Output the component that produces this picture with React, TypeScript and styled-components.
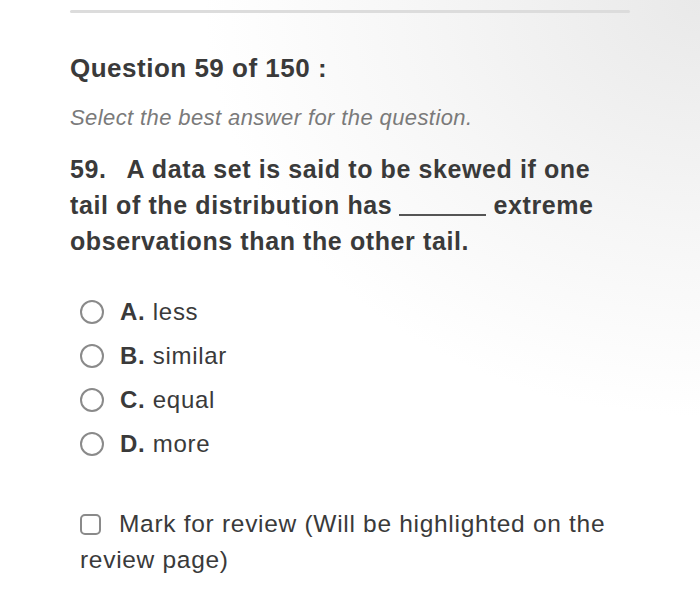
import React, {useState} from "react";
import styled, {createGlobalStyle} from "styled-components";

const GlobalStyle = createGlobalStyle`
  html, body {
    margin: 0;
    padding: 0;
  }
  body {
    font-family: "Liberation Sans", Arial, sans-serif;
    color: #3a3a3a;
  }
`

const Page = styled.div`
  width: 700px;
  height: 589px;
  box-sizing: border-box;
  padding: 10px 70px 0 70px;
  background: radial-gradient(ellipse 620px 520px at 100% 0%, #e9e9e9 0%, #f6f6f6 45%, #ffffff 80%);
  overflow: hidden;
`

const TopRule = styled.div`
  height: 3px;
  border-radius: 2px;
  background: #dcdcdc;
`

const Title = styled.h2`
  margin: 41px 0 0 0;
  font-size: 26px;
  font-weight: bold;
  line-height: 28px;
  letter-spacing: 0.5px;
  color: #3a3a3a;
`

const Instruction = styled.p`
  margin: 24px 0 0 0;
  font-size: 22px;
  font-style: italic;
  line-height: 24px;
  letter-spacing: 0.4px;
  color: #7a7a7a;
`

const QuestionText = styled.p`
  margin: 21px 0 0 0;
  font-size: 25px;
  font-weight: bold;
  line-height: 36px;
  letter-spacing: 0.6px;
  color: #3a3a3a;

  & > .num {
    margin-right: 20px;
  }

  & > .blank {
    display: inline-block;
    width: 87px;
    margin: 0 0 0 -1px;
    border-bottom: 2px solid #555;
    vertical-align: -2px;
  }
`

const Options = styled.div`
  margin: 37px 0 0 10px;
  display: flex;
  flex-direction: column;
  gap: 12px;
`

const Option = styled.label`
  display: flex;
  align-items: center;
  gap: 16px;
  height: 32px;
  font-size: 24px;
  letter-spacing: 0.7px;
  color: #3a3a3a;
  cursor: pointer;
`

const Radio = styled.span<{checked: boolean}>`
  width: 20px;
  height: 20px;
  border-radius: 50%;
  border: 2px solid #8a8a8a;
  box-sizing: content-box;
  display: flex;
  align-items: center;
  justify-content: center;

  &::after {
    content: "";
    width: 10px;
    height: 10px;
    border-radius: 50%;
    background: ${p => p.checked ? '#3a3a3a' : 'transparent'};
  }
`

const Review = styled.label`
  display: block;
  margin: 46px 0 0 10px;
  font-size: 24.5px;
  line-height: 36px;
  letter-spacing: 0.7px;
  color: #3a3a3a;
  cursor: pointer;
`

const Checkbox = styled.span<{checked: boolean}>`
  display: inline-block;
  width: 17px;
  height: 17px;
  border: 2px solid #8a8a8a;
  border-radius: 5px;
  margin-right: 18px;
  vertical-align: -3px;
  background: ${p => p.checked ? '#8a8a8a' : 'transparent'};
`

const answers = [
    {key: 'A', text: 'less'},
    {key: 'B', text: 'similar'},
    {key: 'C', text: 'equal'},
    {key: 'D', text: 'more'},
]

function App() {
    const [selected, setSelected] = useState<string>('')
    const [marked, setMarked] = useState(false)

    return (
        <Page>
            <GlobalStyle/>
            <TopRule/>
            <Title>Question 59 of 150 :</Title>
            <Instruction>Select the best answer for the question.</Instruction>
            <QuestionText>
                <span className="num">59.</span>A data set is said to be skewed if one tail of the distribution
                has <span className="blank"/> extreme observations than the other tail.
            </QuestionText>
            <Options>
                {answers.map(a => (
                    <Option key={a.key} onClick={() => setSelected(a.key)}>
                        <Radio checked={selected === a.key}/>
                        <span><b>{a.key}.</b> {a.text}</span>
                    </Option>
                ))}
            </Options>
            <Review onClick={() => setMarked(!marked)}>
                <Checkbox checked={marked}/>
                Mark for review (Will be highlighted on the review page)
            </Review>
        </Page>
    );
}

export default App
